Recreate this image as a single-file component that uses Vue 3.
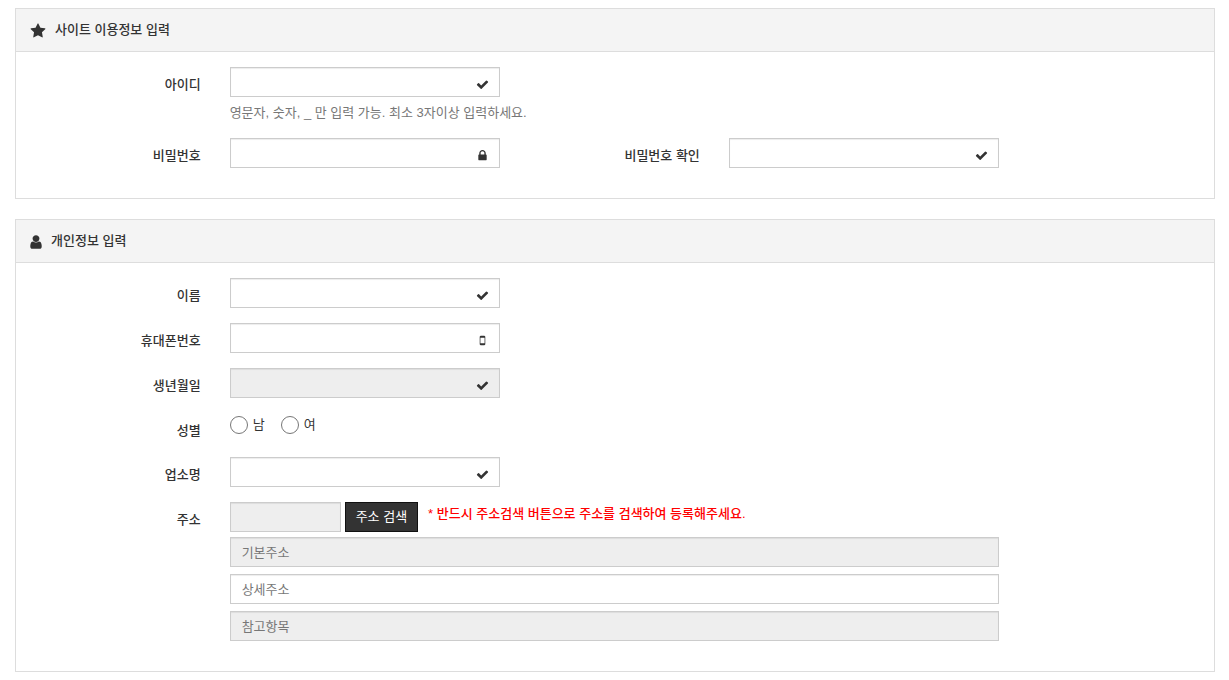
<script setup>
import { ref } from 'vue'

const icons = {
  check: 'M1671 566q0 40-28 68l-724 724-136 136q-28 28-68 28t-68-28l-136-136-362-362q-28-28-28-68t28-68l136-136q28-28 68-28t68 28l294 295 656-657q28-28 68-28t68 28l136 136q28 28 28 68z',
  star: 'M1728 647q0 22-26 48l-363 354 86 500q1 7 1 20 0 21-10.5 35.5t-30.5 14.5q-19 0-40-12l-449-236-449 236q-22 12-40 12-21 0-31.5-14.5t-10.5-35.5q0-6 2-20l86-500-364-354q-25-27-25-48 0-37 56-46l502-73 225-455q19-41 49-41t49 41l225 455 502 73q56 9 56 46z',
  lock: 'M640 768h512v-192q0-106-75-181t-181-75-181 75-75 181v192zm832 96v576q0 40-28 68t-68 28h-960q-40 0-68-28t-28-68v-576q0-40 28-68t68-28h32v-192q0-184 132-316t316-132 316 132 132 316v192h32q40 0 68 28t28 68z',
  user: 'M1536 1399q0 109-62.5 187t-150.5 78h-854q-88 0-150.5-78t-62.5-187q0-85 8.5-160.5t31.5-152 58.5-131 94-89 134.5-34.5q131 128 313 128t313-128q76 0 134.5 34.5t94 89 58.5 131 31.5 152 8.5 160.5zm-256-887q0 159-112.5 271.5t-271.5 112.5-271.5-112.5-112.5-271.5 112.5-271.5 271.5-112.5 271.5 112.5 112.5 271.5z',
  mobile: 'M1184 1248v-704q0-13-9.500-22.500t-22.500-9.500h-512q-13 0-22.500 9.500t-9.500 22.500v704q0 13 9.500 22.500t22.500 9.500h512q13 0 22.500-9.500t9.500-22.500zm96-864v1024q0 52-38 90t-90 38h-512q-52 0-90-38t-38-90v-1024q0-52 38-90t90-38h512q52 0 90 38t38 90z',
}

const accountRows = [
  [{ id: 'user-id', label: '아이디', type: 'text', icon: 'check', help: '영문자, 숫자, _ 만 입력 가능. 최소 3자이상 입력하세요.' }],
  [
    { id: 'password', label: '비밀번호', type: 'password', icon: 'lock' },
    { id: 'password-confirm', label: '비밀번호 확인', type: 'password', icon: 'check' },
  ],
]

const personalFields = [
  { id: 'name', label: '이름', type: 'text', icon: 'check' },
  { id: 'phone', label: '휴대폰번호', type: 'tel', icon: 'mobile' },
  { id: 'birth', label: '생년월일', type: 'text', icon: 'check', readonly: true },
]

const addressLines = [
  { id: 'addr1', label: '기본주소', readonly: true },
  { id: 'addr2', label: '상세주소', readonly: false },
  { id: 'addr3', label: '참고항목', readonly: true },
]

const form = ref({})
</script>

<template>
  <form class="register" @submit.prevent>
    <section class="panel">
      <h2 class="heading">
        <svg class="star" viewBox="0 0 1792 1792" aria-hidden="true"><path :d="icons.star" /></svg>
        사이트 이용정보 입력
      </h2>
      <div class="body">
        <div v-for="(row, i) in accountRows" :key="i" class="row">
          <template v-for="f in row" :key="f.id">
            <label class="label" :for="f.id">{{ f.label }}</label>
            <div class="field">
              <div class="control">
                <input :id="f.id" v-model="form[f.id]" :type="f.type" class="input" />
                <svg class="mark" viewBox="0 0 1792 1792" aria-hidden="true"><path :d="icons[f.icon]" /></svg>
              </div>
              <p v-if="f.help" class="help">{{ f.help }}</p>
            </div>
          </template>
        </div>
      </div>
    </section>

    <section class="panel">
      <h2 class="heading">
        <svg class="user" viewBox="256 0 1280 1792" aria-hidden="true"><path :d="icons.user" /></svg>
        개인정보 입력
      </h2>
      <div class="body">
        <div v-for="f in personalFields" :key="f.id" class="row">
          <label class="label" :for="f.id">{{ f.label }}</label>
          <div class="field">
            <div class="control">
              <input :id="f.id" v-model="form[f.id]" :type="f.type" class="input" :readonly="f.readonly" />
              <svg class="mark" viewBox="0 0 1792 1792" aria-hidden="true"><path :d="icons[f.icon]" /></svg>
            </div>
          </div>
        </div>

        <div class="row" role="radiogroup" aria-labelledby="gender-label">
          <span id="gender-label" class="label">성별</span>
          <div class="field radios">
            <label class="radio"><input v-model="form.gender" type="radio" name="gender" value="m" />남</label>
            <label class="radio"><input v-model="form.gender" type="radio" name="gender" value="f" />여</label>
          </div>
        </div>

        <div class="row">
          <label class="label" for="shop">업소명</label>
          <div class="field">
            <div class="control">
              <input id="shop" v-model="form.shop" type="text" class="input" />
              <svg class="mark" viewBox="0 0 1792 1792" aria-hidden="true"><path :d="icons.check" /></svg>
            </div>
          </div>
        </div>

        <div class="row">
          <label class="label" for="zip">주소</label>
          <div class="field wide">
            <div class="search">
              <input id="zip" v-model="form.zip" type="text" class="input zip" readonly />
              <button type="button" class="button">주소 검색</button>
              <strong class="notice">* 반드시 주소검색 버튼으로 주소를 검색하여 등록해주세요.</strong>
            </div>
            <div class="lines">
              <input
                v-for="a in addressLines"
                :id="a.id"
                :key="a.id"
                v-model="form[a.id]"
                type="text"
                class="input"
                :placeholder="a.label"
                :aria-label="a.label"
                :readonly="a.readonly"
              />
            </div>
          </div>
        </div>
      </div>
    </section>
  </form>
</template>

<style>
body {
  margin: 0;
  background: #fff;
}
</style>

<style scoped>
.register,
.register * {
  box-sizing: border-box;
}
.register {
  padding: 8px 14px 8px 15px;
  font: 13px/20px "Liberation Sans", "Noto Sans CJK KR", sans-serif;
  color: #333;
}
.panel {
  margin-bottom: 20px;
  border: 1px solid #ddd;
}
.heading {
  display: flex;
  align-items: center;
  height: 43px;
  margin: 0;
  padding: 0 14px;
  border-bottom: 1px solid #ddd;
  background: #f4f4f4;
  font-size: 13px;
  font-weight: 500;
}
svg {
  fill: #333;
}
.star,
.user {
  height: 16px;
  margin: 2px 9px 0 0;
}
.star {
  width: 16px;
}
.user {
  width: 12px;
}
.body {
  padding: 15px 0;
}
.row {
  display: grid;
  grid-template-columns: repeat(12, minmax(0, 1fr));
  margin-bottom: 15px;
}
.label {
  grid-column: span 2;
  padding: 8px 15px 0;
  text-align: right;
  font-weight: 500;
}
.field {
  grid-column: span 3;
  padding: 0 15px 0 14px;
}
.wide {
  grid-column: span 8;
}
.control {
  position: relative;
}
.input {
  display: block;
  width: 100%;
  height: 30px;
  margin: 0;
  padding: 4px 11px;
  border: 1px solid #ccc;
  border-radius: 0;
  background: #fff;
  box-shadow: inset 0 1px 1px rgba(0, 0, 0, 0.075);
  font: inherit;
  color: #333;
}
.input:read-only {
  background: #eee;
}
.input::placeholder {
  color: #777;
  opacity: 1;
}
.mark {
  position: absolute;
  top: 11px;
  right: 11px;
  width: 13px;
  height: 13px;
}
.help {
  margin: 6px 0 0;
  color: #777;
  white-space: nowrap;
}
.radios {
  display: flex;
  gap: 16px;
  height: 29px;
}
.radio {
  display: flex;
  align-items: center;
  gap: 5px;
  height: 24px;
}
.radio input {
  width: 18px;
  height: 18px;
  margin: 0;
}
.search {
  display: flex;
  margin-bottom: 5px;
}
.zip {
  width: 111px;
}
.button {
  height: 30px;
  margin: 0 10px 0 4px;
  padding: 0 10px;
  border: 1px solid #111;
  border-radius: 0;
  background: #333;
  font: inherit;
  color: #fff;
}
.notice {
  padding-top: 2px;
  font-weight: 500;
  color: #f00;
}
.lines {
  display: grid;
  gap: 7px;
}
</style>
